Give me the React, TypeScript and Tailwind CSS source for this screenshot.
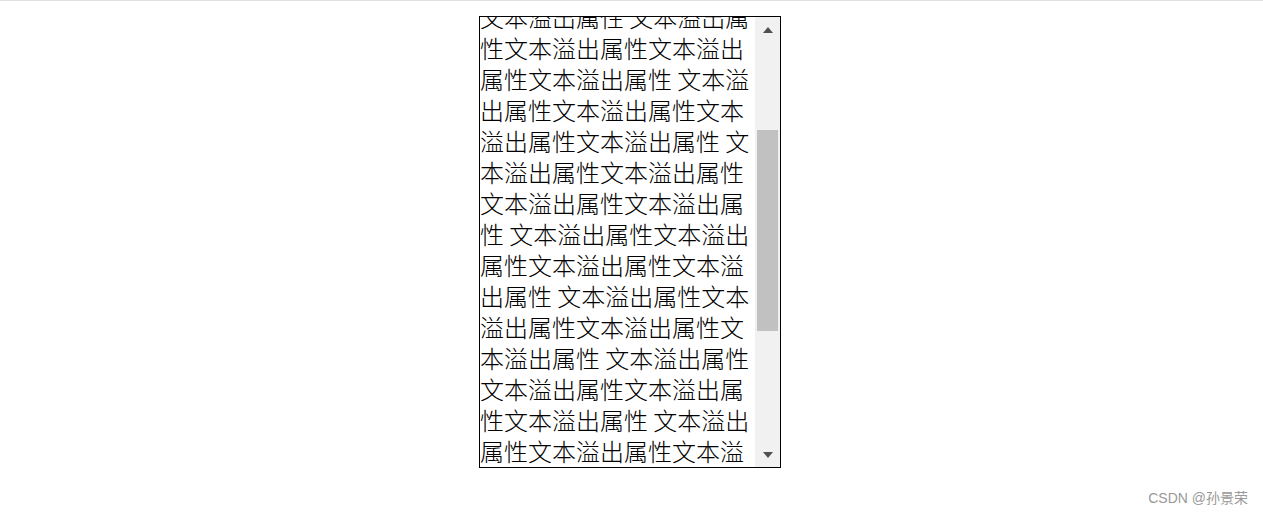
import { useEffect, useRef } from "react";

const UNIT = "文本溢出属性文本溢出属性文本溢出属性文本溢出属性 ";

function Arrow({ down }: { down?: boolean }) {
  return (
    <div className="flex h-[25px] items-center justify-center">
      <svg width="10" height="6" viewBox="0 0 10 6">
        <path d={down ? "M0 0 H10 L5 6 Z" : "M0 6 H10 L5 0 Z"} fill="#505050" />
      </svg>
    </div>
  );
}

export default function App() {
  const textRef = useRef<HTMLDivElement>(null);

  useEffect(() => {
    // scrolled part-way down, as in the screenshot
    if (textRef.current) textRef.current.scrollTop = 202;
  }, []);

  return (
    <div className="relative h-[515px] w-full overflow-hidden bg-white">
      <div className="h-px w-full bg-[#e0e0e0]" />
      <div className="flex justify-center pt-[15px]">
        <div className="ml-[-3px] flex h-[452px] w-[302px] border border-black">
          <div
            ref={textRef}
            className="h-full flex-1 overflow-hidden text-[24px] leading-[31px] font-light text-black"
            style={{ fontFamily: '"Noto Sans CJK SC", sans-serif' }}
          >
            {UNIT.repeat(14)}
          </div>
          <div className="flex w-[25px] flex-col bg-[#f1f1f1]">
            <Arrow />
            <div className="flex-1 px-[2px] pt-[88px]">
              <div className="h-[201px] bg-[#c1c1c1]" />
            </div>
            <Arrow down />
          </div>
        </div>
      </div>
      <div
        className="absolute right-[15px] bottom-[7px] text-[14px] leading-[20px] text-[#999]"
        style={{ fontFamily: '"Liberation Sans", "Noto Sans CJK SC", sans-serif' }}
      >
        CSDN @孙景荣
      </div>
    </div>
  );
}
